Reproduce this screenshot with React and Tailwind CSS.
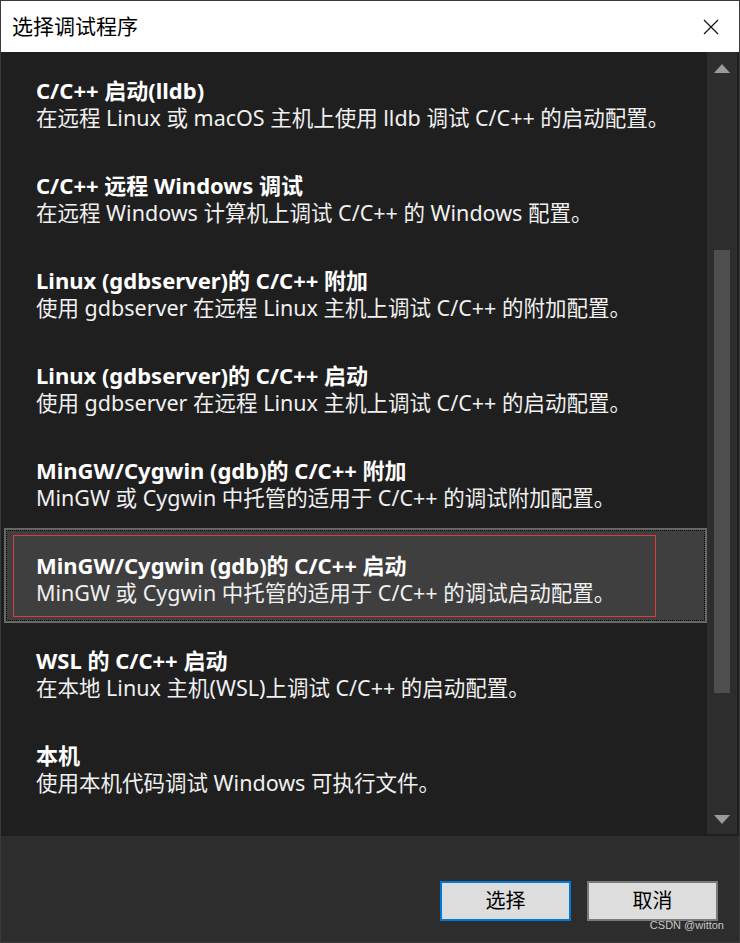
import React from "react";

const items = [
  { t: "C/C++ 启动(lldb)", d: "在远程 Linux 或 macOS 主机上使用 lldb 调试 C/C++ 的启动配置。" },
  { t: "C/C++ 远程 Windows 调试", d: "在远程 Windows 计算机上调试 C/C++ 的 Windows 配置。" },
  { t: "Linux (gdbserver)的 C/C++ 附加", d: "使用 gdbserver 在远程 Linux 主机上调试 C/C++ 的附加配置。" },
  { t: "Linux (gdbserver)的 C/C++ 启动", d: "使用 gdbserver 在远程 Linux 主机上调试 C/C++ 的启动配置。" },
  { t: "MinGW/Cygwin (gdb)的 C/C++ 附加", d: "MinGW 或 Cygwin 中托管的适用于 C/C++ 的调试附加配置。" },
  { t: "MinGW/Cygwin (gdb)的 C/C++ 启动", d: "MinGW 或 Cygwin 中托管的适用于 C/C++ 的调试启动配置。", sel: true },
  { t: "WSL 的 C/C++ 启动", d: "在本地 Linux 主机(WSL)上调试 C/C++ 的启动配置。" },
  { t: "本机", d: "使用本机代码调试 Windows 可执行文件。" },
];

const font = { fontFamily: '"Noto Sans", "Noto Sans CJK SC", sans-serif' };

function Lines({ t, d }) {
  return (
    <>
      <div className="whitespace-nowrap text-[22px] font-bold leading-[28px] text-white">{t}</div>
      <div className="whitespace-nowrap text-[21.5px] leading-[28px] text-[#f0f0f0]">{d}</div>
    </>
  );
}

function Item({ t, d, sel }) {
  if (sel) {
    return (
      <div className="relative h-[95px] border-2 border-[#686868] bg-[#3f3f3f]">
        <div className="h-full border border-dotted border-black pl-[29px] pt-[20px]">
          <Lines t={t} d={d} />
        </div>
        <div className="pointer-events-none absolute left-[7px] top-[5px] h-[82px] w-[643px] border border-[#e03a3a]" />
      </div>
    );
  }
  return (
    <div className="h-[95px] pl-[32px] pt-[23px]">
      <Lines t={t} d={d} />
    </div>
  );
}

export default function App() {
  return (
    <div className="flex h-[943px] w-[740px] flex-col border border-[#3a3a3a] bg-[#2d2d2d]" style={font}>
      <div className="flex h-[51px] shrink-0 items-center justify-between bg-white pl-[11px] pr-[20px]">
        <span className="text-[21px] text-black">选择调试程序</span>
        <svg width="16" height="16" viewBox="0 0 16 16" className="mt-[1px]">
          <path d="M1 1 L15 15 M15 1 L1 15" stroke="#111" strokeWidth="1.2" fill="none" />
        </svg>
      </div>
      <div className="flex h-[784px] shrink-0 bg-[#1f1f1f] pr-[2px]">
        <div className="flex-1 overflow-hidden pl-[3px] pt-[1px]">
          {items.map((it, i) => (
            <Item key={i} {...it} />
          ))}
        </div>
        <div className="flex h-[782px] w-[30px] flex-col items-center bg-[#2d2d2d]">
          <svg width="16" height="9" viewBox="0 0 16 9" className="mt-[12px]">
            <path d="M8 0 L16 9 L0 9 Z" fill="#9a9a9a" />
          </svg>
          <div className="mt-[177px] h-[443px] w-[16px] bg-[#4e4e4e]" />
          <div className="flex-1" />
          <svg width="16" height="9" viewBox="0 0 16 9" className="mb-[10px]">
            <path d="M0 0 L16 0 L8 9 Z" fill="#9a9a9a" />
          </svg>
        </div>
      </div>
      <div className="relative flex flex-1 items-start justify-end gap-[16px] pr-[21px] pt-[45px]">
        <button className="h-[40px] w-[131px] border-2 border-[#0078d7] bg-[#dddddd] text-[20px] text-black">
          选择
        </button>
        <button className="h-[40px] w-[131px] border-2 border-[#7a7a7a] bg-[#dddddd] text-[20px] text-black">
          取消
        </button>
        <span
          className="absolute bottom-[9px] right-[15px] text-[11px] text-[#c8c8c8]"
          style={{ fontFamily: '"Liberation Sans", sans-serif' }}
        >
          CSDN @witton
        </span>
      </div>
    </div>
  );
}
